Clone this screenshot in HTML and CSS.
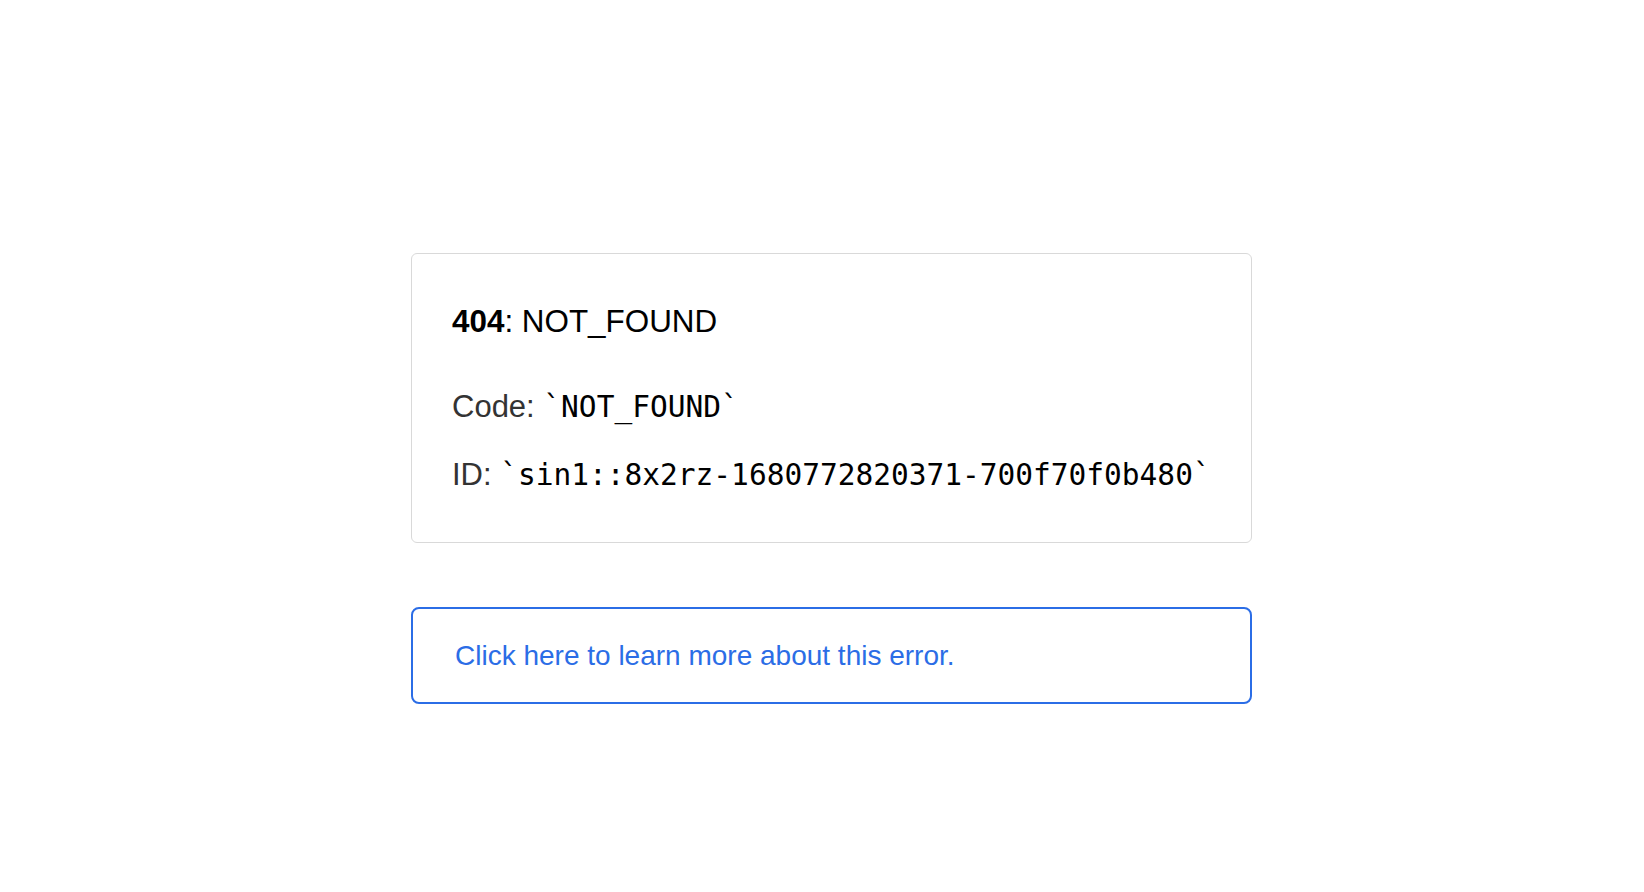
FILE: index.html
```html
<!DOCTYPE html>
<html lang="en">
<head>
<meta charset="utf-8">
<title>404: NOT_FOUND</title>
<link rel="stylesheet" href="styles.css">
</head>
<body>
<main class="page">
  <div class="wrap">
    <p class="devinfo">
      <span class="error-code"><strong>404</strong>: NOT_FOUND</span>
      <span class="devinfo-line devinfo-code">Code: <code>`NOT_FOUND`</code></span>
      <span class="devinfo-line">ID: <code>`sin1::8x2rz-1680772820371-700f70f0b480`</code></span>
    </p>
    <a class="learn-more" href="#">Click here to learn more about this error.</a>
  </div>
</main>
</body>
</html>
```
FILE: styles.css
```css
html, body {
  margin: 0;
  padding: 0;
  background: #ffffff;
}

body {
  font-family: "Liberation Sans", Arial, Helvetica, sans-serif;
  color: #000;
}

.page {
  padding: 253px 0 0 19px;
  display: flex;
  justify-content: center;
}

.wrap {
  width: 841px;
  display: flex;
  flex-direction: column;
}

.devinfo {
  margin: 0 0 64px 0;
  box-sizing: border-box;
  border: 1px solid #d9d9d9;
  border-radius: 6px;
  padding: 48px 30px 47px 40px;
  display: flex;
  flex-direction: column;
}

.error-code {
  font-size: 31.4px;
  line-height: 40px;
  color: #000;
  margin-bottom: 45px;
}

.error-code strong {
  font-weight: 700;
}

.devinfo-line {
  font-size: 31px;
  line-height: 40px;
  color: #333333;
  white-space: nowrap;
}

.devinfo-code {
  margin-bottom: 28px;
}

.devinfo-line code {
  font-family: "DejaVu Sans Mono", "Liberation Mono", monospace;
  font-size: 29.5px;
  line-height: 1;
  color: #000;
}

.learn-more {
  display: block;
  box-sizing: border-box;
  border: 2px solid #2b6de6;
  border-radius: 8px;
  padding: 30px 42px 30px 42px;
  font-size: 28px;
  line-height: 33px;
  color: #2b6de6;
  text-decoration: none;
}
```
